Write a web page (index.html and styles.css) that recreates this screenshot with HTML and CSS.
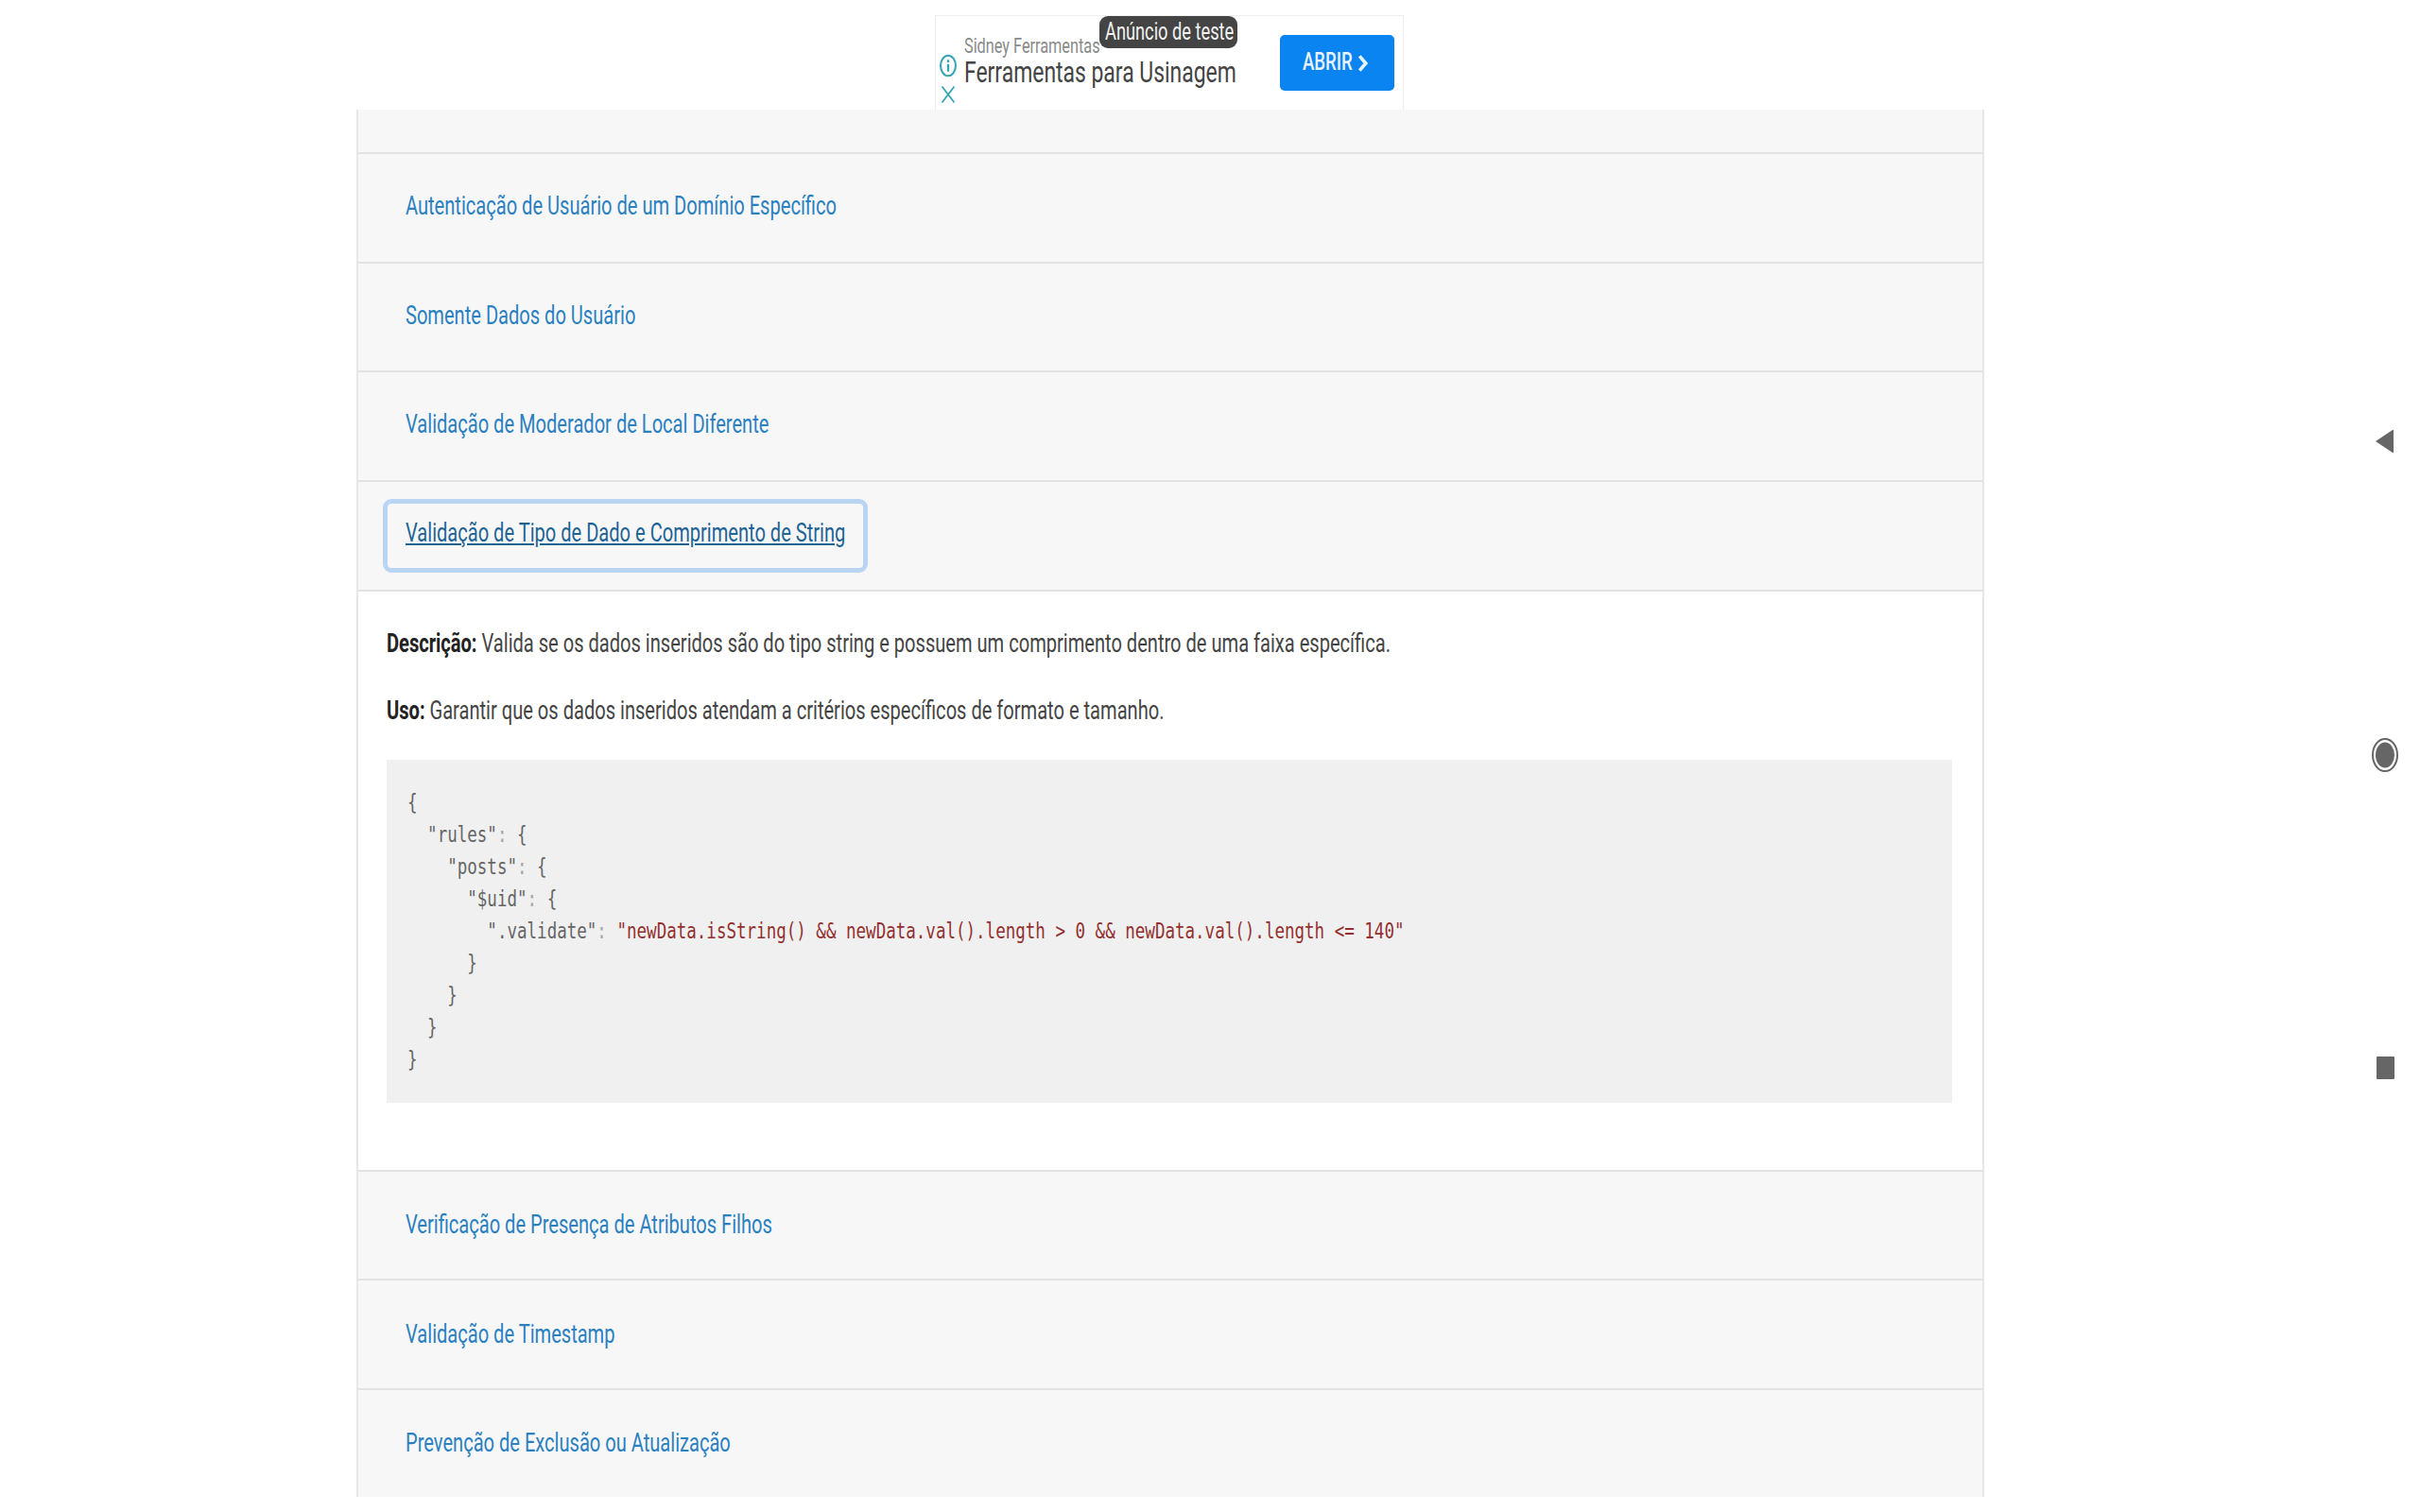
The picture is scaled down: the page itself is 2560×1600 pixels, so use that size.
FILE: index.html
```html
<!DOCTYPE html>
<html lang="pt">
<head>
<meta charset="utf-8">
<title>Regras de validação</title>
<link rel="stylesheet" href="styles.css">
</head>
<body>
<header class="ad-zone">
  <div class="ad">
    <div class="ad-icons">
      <svg class="ad-info" viewBox="0 0 16 22" aria-hidden="true"><ellipse cx="8" cy="11" rx="7" ry="9.5" fill="none" stroke="#35a5b2" stroke-width="1.8"/><rect x="7" y="9.5" width="2" height="7" fill="#35a5b2"/><rect x="7" y="5.5" width="2" height="2.4" fill="#35a5b2"/></svg>
      <svg class="ad-close" viewBox="0 0 16 20" aria-hidden="true"><path d="M1.5 1.5 14.5 18.5M14.5 1.5 1.5 18.5" fill="none" stroke="#35a5b2" stroke-width="1.8"/></svg>
    </div>
    <div class="ad-copy">
      <span class="sq ad-brand">Sidney Ferramentas</span>
      <span class="sq ad-title">Ferramentas para Usinagem</span>
    </div>
    <a class="ad-cta" href="#"><span class="sq ad-cta-text">ABRIR</span><svg class="ad-chev" viewBox="0 0 10 18" aria-hidden="true"><path d="M2 2 8 9 2 16" fill="none" stroke="#e8f3ff" stroke-width="3.2"/></svg></a>
    <span class="ad-tag"><span class="sq">Anúncio de teste</span></span>
  </div>
</header>
<main class="accordion">
  <div class="row row-cut"></div>
  <div class="row"><a class="link" href="#"><span class="sq">Autenticação de Usuário de um Domínio Específico</span></a></div>
  <div class="row"><a class="link" href="#"><span class="sq">Somente Dados do Usuário</span></a></div>
  <div class="row"><a class="link" href="#"><span class="sq">Validação de Moderador de Local Diferente</span></a></div>
  <div class="row"><a class="link link-focus" href="#"><span class="sq">Validação de Tipo de Dado e Comprimento de String</span></a></div>
  <section class="panel">
    <p class="para"><span class="sq"><b>Descrição:</b> Valida se os dados inseridos são do tipo string e possuem um comprimento dentro de uma faixa específica.</span></p>
    <p class="para"><span class="sq"><b>Uso:</b> Garantir que os dados inseridos atendam a critérios específicos de formato e tamanho.</span></p>
    <pre class="code"><code class="sq">{
  "rules"<i>:</i> {
    "posts"<i>:</i> {
      "$uid"<i>:</i> {
        ".validate"<i>:</i> <em>"newData.isString() &amp;&amp; newData.val().length &gt; 0 &amp;&amp; newData.val().length &lt;= 140"</em>
      }
    }
  }
}</code></pre>
  </section>
  <div class="row"><a class="link" href="#"><span class="sq">Verificação de Presença de Atributos Filhos</span></a></div>
  <div class="row"><a class="link" href="#"><span class="sq">Validação de Timestamp</span></a></div>
  <div class="row row-last"><a class="link" href="#"><span class="sq">Prevenção de Exclusão ou Atualização</span></a></div>
</main>
<nav class="softnav" aria-label="Navegação">
  <svg class="nav-back" viewBox="0 0 19 26" aria-hidden="true"><path d="M0 13 18 1a.7.7 0 0 1 1 .6V24.4a.7.7 0 0 1-1 .6Z" fill="#666"/></svg>
  <svg class="nav-home" viewBox="0 0 28 36" aria-hidden="true"><ellipse cx="14" cy="18" rx="13" ry="17" fill="none" stroke="#666" stroke-width="2"/><ellipse cx="14" cy="18" rx="10" ry="13.5" fill="#666"/></svg>
  <svg class="nav-recent" viewBox="0 0 19 24" aria-hidden="true"><rect width="19" height="24" rx="1" fill="#666"/></svg>
</nav>
</body>
</html>
```
FILE: styles.css
```css
* { box-sizing: border-box; }
html, body { margin: 0; height: 1600px; overflow: hidden; }
body { background: #fff; font-family: Roboto, "Liberation Sans", sans-serif; color: #444; }

.sq { display: inline-block; transform: scaleX(.73); transform-origin: left center; white-space: nowrap; }

.ad-zone { height: 116px; margin-left: 377px; width: 1722px; padding-top: 16px; display: flex; justify-content: center; }
.ad { position: relative; width: 496px; height: 100px; margin-left: -3px; border: 1px solid #eeeeee; border-bottom: 0; display: flex; }
.ad-icons { width: 30px; padding: 40px 0 0 2px; display: flex; flex-direction: column; gap: 8px; }
.ad-info { width: 22px; height: 25px; }
.ad-close { width: 16px; height: 20px; margin-left: 3px; }
.ad-copy { width: 336px; padding-top: 20px; display: flex; flex-direction: column; }
.ad-brand { font-size: 22.3px; line-height: 23px; color: #8a8a8a; }
.ad-title { font-size: 31.4px; line-height: 33px; color: #444; }
.ad-cta { position: absolute; left: 364px; top: 20px; width: 121px; height: 59px; background: #0a84f0; border-radius: 5px; display: flex; align-items: center; padding: 0 0 3px 24px; text-decoration: none; }
.ad-cta-text { width: 58px; font-size: 25.5px; font-weight: 500; color: #e8f3ff; }
.ad-chev { width: 11px; height: 20px; margin-top: 3px; }
.ad-tag { position: absolute; left: 173px; top: 0; width: 146px; height: 34px; background: #444; border-radius: 9px; padding-left: 6px; font-size: 25px; line-height: 33px; color: #f2f2f2; }

.accordion { margin-left: 377px; width: 1722px; border-left: 2px solid #e6e6e6; border-right: 2px solid #e6e6e6; }
.row { height: 115.7px; padding-left: 50px; display: flex; align-items: center; background: #f7f7f7; border-bottom: 2px solid #e2e2e2; }
.row-cut { height: 47px; }
.row-last { height: 113px; border-bottom: 0; }
.link { display: block; font-size: 27.5px; line-height: 33px; padding-bottom: 5px; color: #2a80c0; text-decoration: none; }
.panel ~ .row .link { padding-bottom: 2px; }
.link-focus { width: 513px; height: 78px; margin-left: -24px; padding: 14px 0 0 19px; border: 5px solid #b9d5f3; border-radius: 9px; color: #1d6394; }
.link-focus .sq { text-decoration: underline; }

.panel { height: 614px; padding: 38px 32px 0 30px; border-bottom: 2px solid #e2e2e2; background: #fff; }
.para { margin: 0 0 37px; font-size: 27.5px; line-height: 34px; color: #444; }
.para + .para { margin-bottom: 35px; }
.para b { font-weight: 700; color: #222; }
.code { margin: 0; height: 363px; padding: 28px 0 0 22px; background: #f0f0f0; font-family: "DejaVu Sans Mono", monospace; font-size: 22.7px; line-height: 34.05px; color: #666; }
.code .sq { display: block; white-space: pre; transform: scaleX(.772); }
.code i { font-style: normal; color: #a5a5a5; }
.code em { font-style: normal; color: #93302f; }

.softnav { position: fixed; top: 0; left: 0; width: 100%; height: 100%; pointer-events: none; }
.softnav svg { position: absolute; }
.nav-back { left: 2513px; top: 454px; width: 19px; height: 26px; }
.nav-home { left: 2509px; top: 781px; width: 28px; height: 36px; }
.nav-recent { left: 2514px; top: 1118px; width: 19px; height: 24px; }
```
